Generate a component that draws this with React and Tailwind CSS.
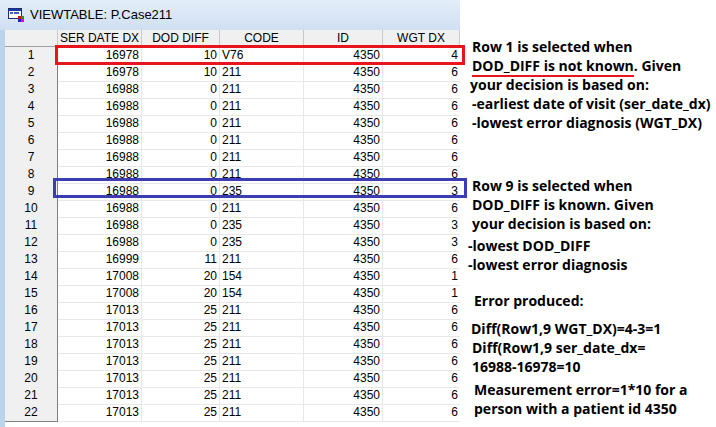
const rows = [
  [16978, 10, 'V76', 4],
  [16978, 10, '211', 6],
  [16988, 0, '211', 6],
  [16988, 0, '211', 6],
  [16988, 0, '211', 6],
  [16988, 0, '211', 6],
  [16988, 0, '211', 6],
  [16988, 0, '211', 6],
  [16988, 0, '235', 3],
  [16988, 0, '211', 6],
  [16988, 0, '235', 3],
  [16988, 0, '235', 3],
  [16999, 11, '211', 6],
  [17008, 20, '154', 1],
  [17008, 20, '154', 1],
  [17013, 25, '211', 6],
  [17013, 25, '211', 6],
  [17013, 25, '211', 6],
  [17013, 25, '211', 6],
  [17013, 25, '211', 6],
  [17013, 25, '211', 6],
  [17013, 25, '211', 6],
];

const cols = 'grid grid-cols-[53px_84px_78px_84px_79px_77px]';

function Line({ children, x = 'pl-3', h = 'h-[19px]' }) {
  return <div className={`${x} ${h} leading-[19px] whitespace-nowrap`}>{children}</div>;
}

export default function App() {
  return (
    <div className="w-[716px] h-[427px] bg-white flex overflow-hidden" style={{ fontFamily: 'Liberation Sans, Arial, sans-serif' }}>
      <div className="w-[460px] shrink-0 flex flex-col bg-[#bcd3ec]">
        <div className="h-[30px] flex items-center gap-1.5 pl-2 bg-gradient-to-b from-[#e4eefa] to-[#cfdff2] text-[13px] text-black">
          <svg width="16" height="14" viewBox="0 0 16 14">
            <rect x="0.5" y="0.5" width="13" height="10" fill="#fff" stroke="#1c2f6b" />
            <rect x="1" y="1" width="12" height="2" fill="#1c3a9a" />
            <rect x="2" y="4" width="3" height="2" fill="#4060c0" />
            <rect x="6" y="4" width="5" height="2" fill="#4060c0" />
            <rect x="10" y="8" width="3" height="3" fill="#d01010" />
            <rect x="13" y="8" width="3" height="3" fill="#10a020" />
            <rect x="10" y="11" width="3" height="3" fill="#2020d0" />
            <rect x="13" y="11" width="3" height="3" fill="#d010d0" />
          </svg>
          VIEWTABLE: P.Case211
        </div>
        <div className="relative flex-1 ml-[5px] bg-white text-[12px] text-black">
          <div className={`${cols} h-[17px] bg-[#f0f0f0] border-b border-[#a0a0a0]`}>
            {['', 'SER_DATE_DX', 'DOD_DIFF', 'CODE', 'ID', 'WGT_DX'].map((h, i) => (
              <div key={i} className="border-r border-[#c8c8c8] text-center leading-[16px]">{h.replace(/_/g, ' ')}</div>
            ))}
          </div>
          {rows.map((r, i) => (
            <div key={i} className={`${cols} h-[17px] leading-[17px]`}>
              <div className="bg-[#f0f0f0] border-r border-b border-[#808080] text-center">{i + 1}</div>
              <div className="text-right pr-0.5 border-r border-b border-[#e8e8e8]">{r[0]}</div>
              <div className="text-right pr-0.5 border-r border-b border-[#e8e8e8]">{r[1]}</div>
              <div className="pl-0.5 border-r border-b border-[#e8e8e8]">{r[2]}</div>
              <div className="text-right pr-0.5 border-r border-b border-[#e8e8e8]">4350</div>
              <div className="text-right pr-0.5 border-b border-[#e8e8e8]">{r[3]}</div>
            </div>
          ))}
          <div className="absolute left-[50px] top-[15px] w-[410px] h-[20px] border-[3px] border-[#e8141e]" />
          <div className="absolute left-[48px] top-[148px] w-[414px] h-[20px] border-[3px] border-[#3c3cb4]" />
        </div>
      </div>
      <div className="flex-1 pt-[37px] text-[14px] font-bold text-black" style={{ fontFamily: 'Open Sans, sans-serif' }}>
        <Line>Row 1 is selected when</Line>
        <Line><span className="border-b-2 border-[#e8141e]">DOD_DIFF is not known</span>. Given</Line>
        <Line x="pl-[10px]">your decision is based on:</Line>
        <Line x="pl-[12px]">-earliest date of visit  (ser_date_dx)</Line>
        <Line x="pl-[12px]">-lowest error diagnosis (WGT_DX)</Line>
        <div className="h-[44px]" />
        <Line x="pl-[12px]">Row 9 is selected when</Line>
        <Line x="pl-[12px]">DOD_DIFF is known. Given</Line>
        <Line x="pl-[12px]" h="h-[22px]">your decision is based on:</Line>
        <Line x="pl-[8px]">-lowest DOD_DIFF</Line>
        <Line x="pl-[8px]">-lowest error diagnosis</Line>
        <div className="h-[17px]" />
        <Line x="pl-[14px]">Error produced:</Line>
        <div className="h-[9px]" />
        <Line x="pl-[11px]">Diff(Row1,9 WGT_DX)=4-3=1</Line>
        <Line x="pl-[12px]">Diff(Row1,9 ser_date_dx=</Line>
        <Line x="pl-[12px]" h="h-[23px]">16988-16978=10</Line>
        <Line x="pl-[14px]">Measurement error=1*10 for a</Line>
        <Line x="pl-[14px]">person with a patient id 4350</Line>
      </div>
    </div>
  );
}
